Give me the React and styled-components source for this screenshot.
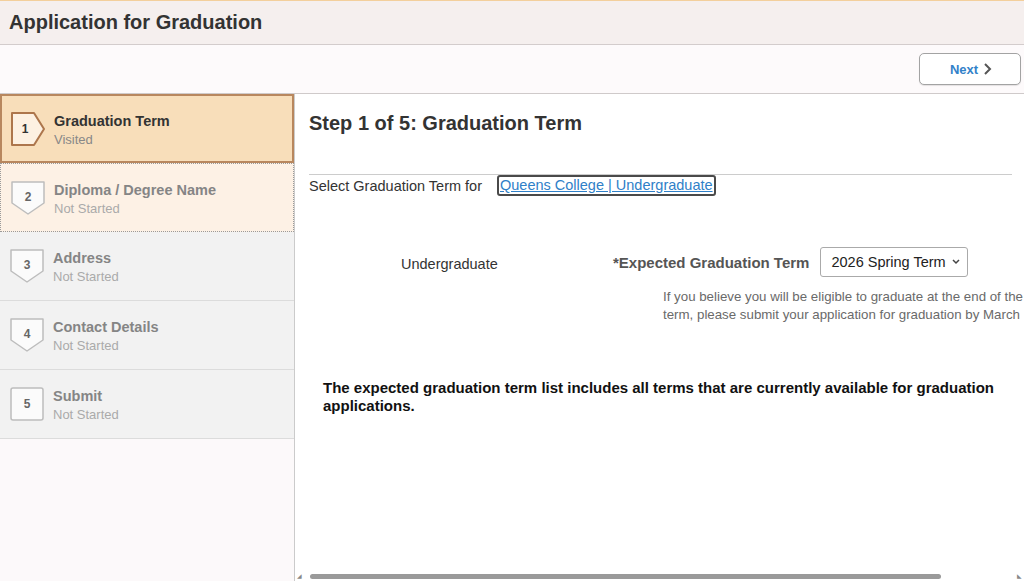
import React from "react";
import styled, { createGlobalStyle } from "styled-components";

const GlobalStyle = createGlobalStyle`
  html, body {
    margin: 0;
    padding: 0;
    background: #fcf9f9;
    font-family: "Liberation Sans", Arial, sans-serif;
    overflow: hidden;
  }
`;

const steps = [
  { n: 1, title: "Graduation Term", status: "Visited", state: "active", shape: "arrow" },
  { n: 2, title: "Diploma / Degree Name", status: "Not Started", state: "hover", shape: "shield" },
  { n: 3, title: "Address", status: "Not Started", state: "idle", shape: "shield" },
  { n: 4, title: "Contact Details", status: "Not Started", state: "idle", shape: "shield" },
  { n: 5, title: "Submit", status: "Not Started", state: "idle", shape: "square" },
];

const StepIcon = ({ shape, n, active }) => {
  const stroke = active ? "#ad764c" : "#bdbdbd";
  const fill = active ? "#fdf1e2" : "#fbfbfb";
  return (
    <IconWrap>
      <svg width="38" height="38" viewBox="0 0 38 38">
        {shape === "arrow" && (
          <polygon points="3,3 25,3 35,19 25,35 3,35" fill={fill} stroke={stroke} strokeWidth="2" strokeLinejoin="round" />
        )}
        {shape === "shield" && (
          <polygon points="3,3 35,3 35,24 19,35 3,24" fill={fill} stroke={stroke} strokeWidth="1.5" strokeLinejoin="round" />
        )}
        {shape === "square" && (
          <rect x="3" y="3" width="32" height="32" rx="2" fill={fill} stroke={stroke} strokeWidth="1.5" />
        )}
        <text
          x={shape === "arrow" ? 16 : 19}
          y={shape === "shield" ? 22 : 23}
          textAnchor="middle"
          fontFamily="Liberation Sans, Arial, sans-serif"
          fontWeight="bold"
          fontSize="12"
          fill={active ? "#333" : "#666"}
        >
          {n}
        </text>
      </svg>
    </IconWrap>
  );
};

const App = () => {
  return (
    <>
      <GlobalStyle />
      <Page>
        <Header>
          <HeaderTitle>Application for Graduation</HeaderTitle>
        </Header>
        <Toolbar>
          <NextButton>
            Next
            <svg width="12" height="14" viewBox="0 0 12 14">
              <polyline points="3,2 8,7 3,12" fill="none" stroke="#555" strokeWidth="2" />
            </svg>
          </NextButton>
        </Toolbar>
        <Body>
          <Sidebar>
            {steps.map((s) => (
              <StepItem key={s.n} $state={s.state}>
                <StepIcon shape={s.shape} n={s.n} active={s.state === "active"} />
                <StepText>
                  <StepTitle $active={s.state === "active"}>{s.title}</StepTitle>
                  <StepStatus $active={s.state === "active"}>{s.status}</StepStatus>
                </StepText>
              </StepItem>
            ))}
          </Sidebar>
          <Main>
            <StepHeading>Step 1 of 5: Graduation Term</StepHeading>
            <SelectRow>
              <span>Select Graduation Term for</span>
              <CareerLink href="#">Queens College | Undergraduate</CareerLink>
            </SelectRow>
            <TermRow>
              <CareerLabel>Undergraduate</CareerLabel>
              <FieldLabel>*Expected Graduation Term</FieldLabel>
              <TermSelect>
                2026 Spring Term
                <svg width="10" height="8" viewBox="0 0 10 8">
                  <polyline points="2,2 5,5 8,2" fill="none" stroke="#444" strokeWidth="1.5" />
                </svg>
              </TermSelect>
            </TermRow>
            <HelpText>
              If you believe you will be eligible to graduate at the end of the
              <br />
              term, please submit your application for graduation by March
            </HelpText>
            <Notice>
              The expected graduation term list includes all terms that are currently available for graduation
              <br />
              applications.
            </Notice>
            <ScrollBar>
              <ScrollArrow>◢</ScrollArrow>
              <ScrollThumb />
              <ScrollArrow $right>◣</ScrollArrow>
            </ScrollBar>
          </Main>
        </Body>
      </Page>
    </>
  );
};

export default App;

const Page = styled.div`
  width: 1024px;
  height: 581px;
  display: flex;
  flex-direction: column;
  overflow: hidden;
`;

const Header = styled.header`
  height: 43px;
  border-top: 1px solid #f3cf9c;
  border-bottom: 1px solid #d3cccc;
  background: #f5efee;
  display: flex;
  align-items: center;
  padding-left: 9px;
`;

const HeaderTitle = styled.h1`
  margin: 0;
  font-size: 20px;
  font-weight: bold;
  color: #333;
`;

const Toolbar = styled.div`
  height: 48px;
  background: #fdfafb;
  border-bottom: 1px solid #cfcaca;
  display: flex;
  align-items: center;
  justify-content: flex-end;
  padding-right: 3px;
`;

const NextButton = styled.button`
  width: 102px;
  height: 32px;
  border: 1px solid #a3a3a3;
  border-radius: 5px;
  background: #fff;
  color: #3282c9;
  font-family: "Liberation Sans", Arial, sans-serif;
  font-size: 13px;
  font-weight: bold;
  display: flex;
  align-items: center;
  justify-content: center;
  gap: 4px;
  padding: 0 0 0 4px;
  box-shadow: 0 1px 1px rgba(0, 0, 0, 0.1);
`;

const Body = styled.div`
  flex: 1;
  display: flex;
  min-height: 0;
`;

const Sidebar = styled.nav`
  width: 294px;
  border-right: 1px solid #cbcbcb;
  background: #fcf9fa;
  display: flex;
  flex-direction: column;
`;

const StepItem = styled.div`
  height: 69px;
  box-sizing: border-box;
  display: flex;
  align-items: flex-start;
  padding: 15px 0 0 8px;
  gap: 7px;
  background: ${({ $state }) =>
    $state === "active" ? "#f8deba" : $state === "hover" ? "#fdf1e5" : "#f2f2f2"};
  border: ${({ $state }) =>
    $state === "active"
      ? "2px solid #b8875e"
      : $state === "hover"
      ? "1px dotted #9a9a9a"
      : "none"};
  border-bottom: ${({ $state }) =>
    $state === "active"
      ? "2px solid #b8875e"
      : $state === "hover"
      ? "1px dotted #9a9a9a"
      : "1px solid #dcdcdc"};
  ${({ $state }) => $state === "active" && "padding-top: 14px; padding-left: 7px;"}
`;

const IconWrap = styled.div`
  width: 38px;
  height: 38px;
  flex-shrink: 0;
`;

const StepText = styled.div`
  display: flex;
  flex-direction: column;
  gap: 3px;
  padding-top: 3px;
`;

const StepTitle = styled.div`
  font-size: 14.5px;
  font-weight: bold;
  color: ${({ $active }) => ($active ? "#333" : "#858585")};
`;

const StepStatus = styled.div`
  font-size: 13px;
  color: ${({ $active }) => ($active ? "#888" : "#aaa")};
`;

const Main = styled.main`
  flex: 1;
  position: relative;
  background: #fff;
  padding: 0 12px 0 14px;
  min-width: 0;
`;

const StepHeading = styled.h2`
  margin: 0;
  padding-top: 18px;
  height: 81px;
  box-sizing: border-box;
  font-size: 20px;
  font-weight: bold;
  color: #333;
  border-bottom: 1px solid #cccccc;
`;

const SelectRow = styled.div`
  display: flex;
  align-items: center;
  gap: 15px;
  font-size: 14.5px;
  color: #333;
`;

const CareerLink = styled.a`
  color: #2f80c8;
  font-size: 14.5px;
  line-height: 17px;
  border: 2px solid #4a4a4a;
  border-radius: 3px;
  padding: 0 1px;
  text-decoration: underline;
`;

const TermRow = styled.div`
  display: flex;
  align-items: center;
  margin-top: 51px;
  padding-left: 92px;
`;

const CareerLabel = styled.div`
  width: 212px;
  font-size: 14.5px;
  color: #333;
  padding-top: 4px;
`;

const FieldLabel = styled.div`
  font-size: 15px;
  font-weight: bold;
  color: #555;
  margin-right: 11px;
`;

const TermSelect = styled.div`
  width: 148px;
  height: 30px;
  box-sizing: border-box;
  border: 1px solid #aaa;
  border-radius: 3px;
  display: flex;
  align-items: center;
  justify-content: space-between;
  padding: 0 6px 0 10px;
  font-size: 14.5px;
  color: #222;
`;

const HelpText = styled.p`
  margin: 11px 0 0 354px;
  font-size: 13.3px;
  line-height: 18px;
  color: #6a6a6a;
  white-space: nowrap;
`;

const Notice = styled.p`
  margin: 55px 0 0 14px;
  font-size: 15px;
  line-height: 18px;
  font-weight: bold;
  color: #111;
  white-space: nowrap;
`;

const ScrollBar = styled.div`
  position: absolute;
  left: 2px;
  right: 2px;
  bottom: 2px;
  height: 6px;
  display: flex;
  align-items: center;
  gap: 8px;
`;

const ScrollArrow = styled.span`
  font-size: 6px;
  color: #888;
  line-height: 6px;
  margin-left: ${({ $right }) => ($right ? "auto" : "0")};
`;

const ScrollThumb = styled.div`
  width: 631px;
  height: 5px;
  border-radius: 3px;
  background: #9a9a9a;
`;
